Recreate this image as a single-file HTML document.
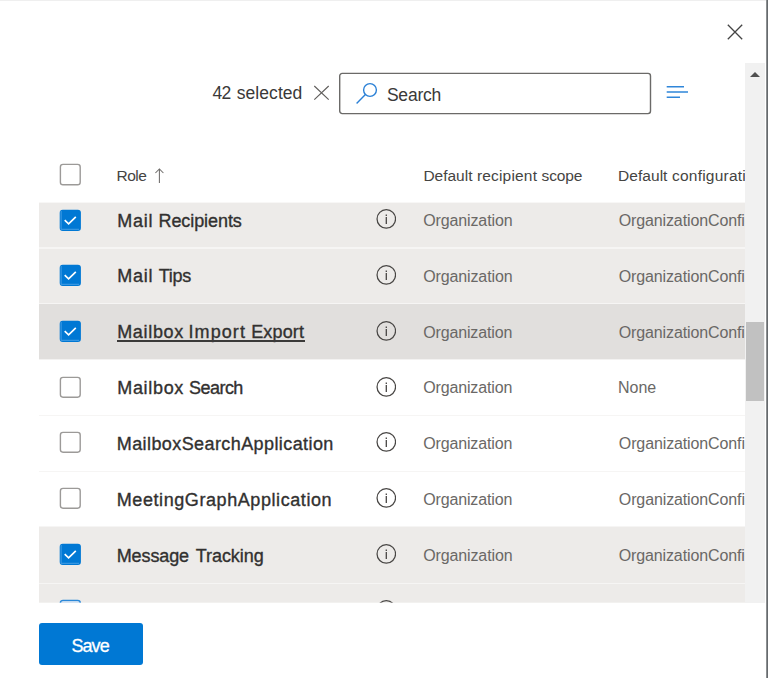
<!DOCTYPE html>
<html lang="en">
<head>
<meta charset="utf-8">
<title>Roles</title>
<style>
*{box-sizing:border-box;margin:0;padding:0}
html,body{width:768px;height:678px;overflow:hidden;background:#fff}
body{position:relative;font-family:"Liberation Sans",sans-serif;color:#323130}
.abs{position:absolute}
.w{position:absolute;white-space:nowrap;line-height:20px;height:20px;color:#3a3938}
#topline{left:0;top:0;width:766px;height:1px;background:#efefef}
#rb1{left:766px;top:0;width:1px;height:678px;background:#8c8f91}
#rb2{left:767px;top:0;width:1px;height:678px;background:#666a6d}
#list{left:39px;top:202px;width:706px;height:401px;overflow:hidden}
.row{position:absolute;left:0;width:706px;height:55.75px;border-bottom:1px solid #f6f5f4;background:#fff}
.row.sel{background:#edebe9;border-bottom-color:#f6f5f4}
.row.foc{background:#e1dfdd;border-bottom-color:#f3f2f1}
.cb{position:absolute;left:19px;top:15.2px;width:24px;height:24px}
.nmw{font-size:18px;color:#323130;-webkit-text-stroke:0.35px #323130}
.ul{position:absolute;left:78px;width:188px;height:2px;background:#3b3a39}
.info{position:absolute;left:337px;top:16.8px;width:20px;height:20px}
.cw{font-size:16px;color:#6a6866}
#sbtrack{left:745px;top:63px;width:20px;height:540px;background:#f1f1f1}
#sbthumb{left:746px;top:322px;width:18.4px;height:78.6px;background:#c1c1c1}
#sbarrow{left:750.3px;top:72px;width:0;height:0;border-left:5px solid transparent;border-right:5px solid transparent;border-bottom:5px solid #505050}
.h{font-size:15.5px;color:#454442}
#save{left:39px;top:623px;width:104px;height:42px;background:#0078d4;border-radius:3px}
</style>
</head>
<body>
<div class="abs" id="topline"></div>
<div class="abs" id="rb1"></div>
<div class="abs" id="rb2"></div>

<svg class="abs" style="left:725px;top:22px" width="20" height="20" viewBox="0 0 20 20"><path d="M2.8 2.8 L17.2 17.2 M17.2 2.8 L2.8 17.2" stroke="#444" stroke-width="1.3" fill="none"/></svg>

<span id="selcount"><span class="w " id="s0" style="left:212.47px;letter-spacing:-0.742px;top:83px;font-size:17.5px">42</span> <span class="w " id="s1" style="left:236.76px;letter-spacing:0.055px;top:83px;font-size:17.5px">selected</span></span>
<svg class="abs" style="left:311px;top:82px" width="21" height="21" viewBox="0 0 21 21"><path d="M3.3 4 L17.7 17.6 M17.7 4 L3.3 17.6" stroke="#605e5c" stroke-width="1.15" fill="none"/></svg>
<svg class="abs" style="left:338px;top:72px" width="315" height="44" viewBox="0 0 315 44"><rect x="1.7" y="1.4" width="310.8" height="40.2" rx="2.5" ry="2.5" fill="#fff" stroke="#6b6a68" stroke-width="1.4"/><circle cx="32" cy="18" r="6.4" fill="none" stroke="#2b80d6" stroke-width="1.4"/><path d="M27.4 22.6 L18.6 31.4" stroke="#2b80d6" stroke-width="1.4" fill="none"/></svg>
<span class="w " id="q0" style="left:386.91px;letter-spacing:-0.21px;top:85px;font-size:17.5px">Search</span>
<svg class="abs" style="left:664px;top:82px" width="28" height="20" viewBox="0 0 28 20"><path d="M2.7 4.7 H20 M2.7 10 H24 M2.7 15.3 H16" stroke="#2f86d9" stroke-width="1.5" fill="none"/></svg>

<div class="abs" id="list">
  <div class="row sel" style="top:-10px;height:57px;border-bottom-width:2px"><svg class="cb" style="top:15.7px" viewBox="0 0 24 24"><rect x="1.7" y="1.7" width="21.2" height="21.2" rx="3" fill="#0078d4"/><path d="M3.1 3 V21.3 H21" stroke="#6db3ee" stroke-width="0.8" fill="none" opacity=".8"/><path d="M6.7 12.2 L10.6 15.8 L17.8 8.9" stroke="#fff" stroke-width="1.7" fill="none"/></svg><span class="nm"><span class="w nmw" id="n0_0" style="left:78.2px;letter-spacing:0.751px;top:19px">Mail</span> <span class="w nmw" id="n0_1" style="left:119.47px;letter-spacing:-0.075px;top:19px">Recipients</span></span><svg class="info" style="top:17.3px" viewBox="0 0 20 20"><circle cx="10.3" cy="9.9" r="9.25" fill="none" stroke="#484644" stroke-width="1.25"/><path d="M10.3 8 V15 M10.3 5.5 V6.9" stroke="#484644" stroke-width="1.3"/></svg><span class="w cw" id="o0" style="left:384.14px;letter-spacing:-0.115px;top:19px">Organization</span><span class="w cw" id="c0" style="left:579.69px;letter-spacing:-0.12px;top:19px">OrganizationConfig</span></div>
  <div class="row sel" style="top:47px;height:55px"><svg class="cb" style="top:14.45px" viewBox="0 0 24 24"><rect x="1.7" y="1.7" width="21.2" height="21.2" rx="3" fill="#0078d4"/><path d="M3.1 3 V21.3 H21" stroke="#6db3ee" stroke-width="0.8" fill="none" opacity=".8"/><path d="M6.7 12.2 L10.6 15.8 L17.8 8.9" stroke="#fff" stroke-width="1.7" fill="none"/></svg><span class="nm"><span class="w nmw" id="n1_0" style="left:78.2px;letter-spacing:0.751px;top:17px">Mail</span> <span class="w nmw" id="n1_1" style="left:119.67px;letter-spacing:-0.223px;top:17px">Tips</span></span><svg class="info" style="top:16.05px" viewBox="0 0 20 20"><circle cx="10.3" cy="9.9" r="9.25" fill="none" stroke="#484644" stroke-width="1.25"/><path d="M10.3 8 V15 M10.3 5.5 V6.9" stroke="#484644" stroke-width="1.3"/></svg><span class="w cw" id="o1" style="left:384.14px;letter-spacing:-0.115px;top:18px">Organization</span><span class="w cw" id="c1" style="left:579.69px;letter-spacing:-0.12px;top:18px">OrganizationConfig</span></div>
  <div class="row foc" style="top:102px;height:56px"><svg class="cb" style="top:15.2px" viewBox="0 0 24 24"><rect x="1.7" y="1.7" width="21.2" height="21.2" rx="3" fill="#0078d4"/><path d="M3.1 3 V21.3 H21" stroke="#6db3ee" stroke-width="0.8" fill="none" opacity=".8"/><path d="M6.7 12.2 L10.6 15.8 L17.8 8.9" stroke="#fff" stroke-width="1.7" fill="none"/></svg><span class="nm"><span class="w nmw" id="n2_0" style="left:78.2px;letter-spacing:0.673px;top:18px">Mailbox</span> <span class="w nmw" id="n2_1" style="left:149.53px;letter-spacing:1.076px;top:18px">Import</span> <span class="w nmw" id="n2_2" style="left:212.19px;letter-spacing:0.162px;top:18px">Export</span></span><i class="ul" style="top:36px"></i><svg class="info" style="top:16.8px" viewBox="0 0 20 20"><circle cx="10.3" cy="9.9" r="9.25" fill="none" stroke="#484644" stroke-width="1.25"/><path d="M10.3 8 V15 M10.3 5.5 V6.9" stroke="#484644" stroke-width="1.3"/></svg><span class="w cw" id="o2" style="left:384.18px;letter-spacing:-0.143px;top:19px">Organization</span><span class="w cw" id="c2" style="left:579.76px;letter-spacing:-0.12px;top:19px">OrganizationConfig</span></div>
  <div class="row " style="top:158px;height:56px"><svg class="cb" style="top:14.7px" viewBox="0 0 24 24"><rect x="2.4" y="2.4" width="19.8" height="19.8" rx="2.6" fill="#fff" stroke="#9c9a98" stroke-width="1.4"/></svg><span class="nm"><span class="w nmw" id="n3_0" style="left:78.23px;letter-spacing:0.681px;top:18px">Mailbox</span> <span class="w nmw" id="n3_1" style="left:150.1px;letter-spacing:-0.557px;top:18px">Search</span></span><svg class="info" style="top:16.55px" viewBox="0 0 20 20"><circle cx="10.3" cy="9.9" r="9.25" fill="none" stroke="#484644" stroke-width="1.25"/><path d="M10.3 8 V15 M10.3 5.5 V6.9" stroke="#484644" stroke-width="1.3"/></svg><span class="w cw" id="o3" style="left:384.2px;letter-spacing:-0.143px;top:18px">Organization</span><span class="w cw" id="c3" style="left:579.1px;letter-spacing:-0.063px;top:18px">None</span></div>
  <div class="row " style="top:214px;height:56px"><svg class="cb" style="top:14.45px" viewBox="0 0 24 24"><rect x="2.4" y="2.4" width="19.8" height="19.8" rx="2.6" fill="#fff" stroke="#9c9a98" stroke-width="1.4"/></svg><span class="nm"><span class="w nmw" id="n4_0" style="left:77.74px;letter-spacing:0.413px;top:18px">MailboxSearchApplication</span></span><svg class="info" style="top:16.3px" viewBox="0 0 20 20"><circle cx="10.3" cy="9.9" r="9.25" fill="none" stroke="#484644" stroke-width="1.25"/><path d="M10.3 8 V15 M10.3 5.5 V6.9" stroke="#484644" stroke-width="1.3"/></svg><span class="w cw" id="o4" style="left:384.2px;letter-spacing:-0.143px;top:18px">Organization</span><span class="w cw" id="c4" style="left:579.83px;letter-spacing:-0.12px;top:18px">OrganizationConfig</span></div>
  <div class="row " style="top:270px;height:55px"><svg class="cb" style="top:14.2px" viewBox="0 0 24 24"><rect x="2.4" y="2.4" width="19.8" height="19.8" rx="2.6" fill="#fff" stroke="#9c9a98" stroke-width="1.4"/></svg><span class="nm"><span class="w nmw" id="n5_0" style="left:77.74px;letter-spacing:0.579px;top:18px">MeetingGraphApplication</span></span><svg class="info" style="top:16.05px" viewBox="0 0 20 20"><circle cx="10.3" cy="9.9" r="9.25" fill="none" stroke="#484644" stroke-width="1.25"/><path d="M10.3 8 V15 M10.3 5.5 V6.9" stroke="#484644" stroke-width="1.3"/></svg><span class="w cw" id="o5" style="left:384.2px;letter-spacing:-0.143px;top:18px">Organization</span><span class="w cw" id="c5" style="left:579.83px;letter-spacing:-0.12px;top:18px">OrganizationConfig</span></div>
  <div class="row sel" style="top:325px;height:57px"><svg class="cb" style="top:15.2px" viewBox="0 0 24 24"><rect x="1.7" y="1.7" width="21.2" height="21.2" rx="3" fill="#0078d4"/><path d="M3.1 3 V21.3 H21" stroke="#6db3ee" stroke-width="0.8" fill="none" opacity=".8"/><path d="M6.7 12.2 L10.6 15.8 L17.8 8.9" stroke="#fff" stroke-width="1.7" fill="none"/></svg><span class="nm"><span class="w nmw" id="n6_0" style="left:77.71px;letter-spacing:-0.104px;top:19px">Message</span> <span class="w nmw" id="n6_1" style="left:156.7px;letter-spacing:-0.048px;top:19px">Tracking</span></span><svg class="info" style="top:16.8px" viewBox="0 0 20 20"><circle cx="10.3" cy="9.9" r="9.25" fill="none" stroke="#484644" stroke-width="1.25"/><path d="M10.3 8 V15 M10.3 5.5 V6.9" stroke="#484644" stroke-width="1.3"/></svg><span class="w cw" id="o6" style="left:384.14px;letter-spacing:-0.115px;top:19px">Organization</span><span class="w cw" id="c6" style="left:579.69px;letter-spacing:-0.12px;top:19px">OrganizationConfig</span></div>
  <div class="row sel" style="top:382px;height:56px"><svg class="cb" style="top:14.2px" viewBox="0 0 24 24"><rect x="2.35" y="2.35" width="19.9" height="19.9" rx="2.6" fill="#c4d9ee" stroke="#2b88d8" stroke-width="1.4"/></svg><span class="nm"><span class="w nmw" id="n7_0" style="left:77.71px;letter-spacing:-0.104px;top:18px">Message</span> <span class="w nmw" id="n7_1" style="left:156.7px;letter-spacing:-0.048px;top:18px">Tracking</span> <span class="w nmw" id="n7_2" style="left:230.4px;letter-spacing:0px;top:18px">ViewOnly</span></span><svg class="info" style="top:15.55px" viewBox="0 0 20 20"><circle cx="10.3" cy="9.9" r="9.25" fill="none" stroke="#484644" stroke-width="1.25"/><path d="M10.3 8 V15 M10.3 5.5 V6.9" stroke="#484644" stroke-width="1.3"/></svg><span class="w cw" id="o7" style="left:384.14px;letter-spacing:-0.115px;top:18px">Organization</span><span class="w cw" id="c7" style="left:579.69px;letter-spacing:-0.12px;top:18px">OrganizationConfig</span></div>
</div>
<div class="abs" style="left:39px;top:602px;width:706px;height:1px;background:rgba(255,255,255,.3)"></div>

<div class="abs" id="hdr" style="left:0;top:140px;width:745px;height:63px;background:#fff;overflow:hidden">
  <div class="abs" style="left:39px;top:62px;width:706px;height:1px;background:#f8f7f6"></div>
  <svg class="abs" style="left:58px;top:22.2px" width="24" height="24" viewBox="0 0 24 24"><rect x="2.4" y="2.4" width="19.8" height="20.4" rx="2.6" fill="#fff" stroke="#9c9a98" stroke-width="1.4"/></svg>
  <span class="w h" id="h0" style="left:116.46px;letter-spacing:-0.495px;top:26px">Role</span>
  <svg class="abs" style="left:153px;top:27px" width="13" height="18" viewBox="0 0 13 18"><path d="M6.4 16 V2 M2.4 6 L6.4 2 L10.4 6" stroke="#6e6c6a" stroke-width="1.05" fill="none"/></svg>
  <span><span class="w h" id="h1_0" style="left:423.4px;letter-spacing:-0.007px;top:26px">Default</span> <span class="w h" id="h1_1" style="left:476.92px;letter-spacing:0.184px;top:26px">recipient</span> <span class="w h" id="h1_2" style="left:541.57px;letter-spacing:-0.13px;top:26px">scope</span></span>
  <span><span class="w h" id="h2_0" style="left:618.1px;letter-spacing:0.035px;top:26px">Default</span> <span class="w h" id="h2_1" style="left:672.03px;letter-spacing:0.22px;top:26px">configuration</span> <span class="w h" id="h2_2" style="left:765px;letter-spacing:0px;top:26px">scope</span></span>
</div>

<div class="abs" id="sbtrack"></div>
<div class="abs" id="sbarrow"></div>
<div class="abs" id="sbthumb"></div>

<div class="abs" id="save"></div>
<span class="w " id="sv" style="left:71.42px;letter-spacing:-0.909px;top:636px;font-size:18px;color:#fff;-webkit-text-stroke:0.3px #fff">Save</span>
</body>
</html>
